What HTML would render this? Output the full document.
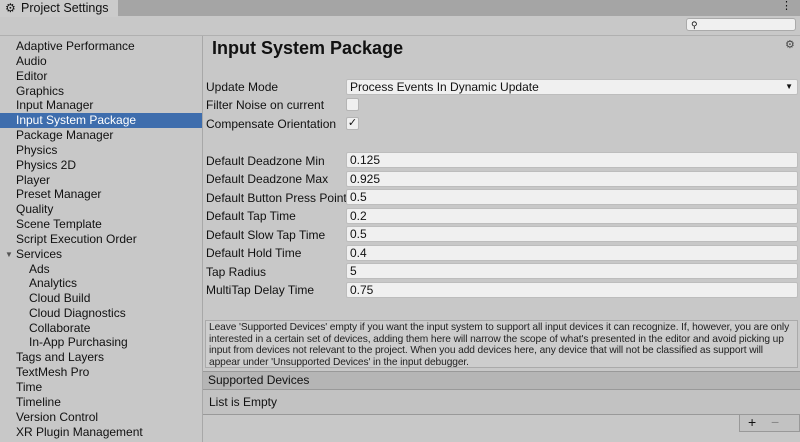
<!DOCTYPE html><html><head><style>
body{margin:0;width:800px;height:442px;background:#c8c8c8;font-family:"Liberation Sans",sans-serif;font-size:12px;color:#111;position:relative;overflow:hidden}
.a{position:absolute}
.tabbar{left:0;top:0;width:800px;height:16px;background:#a5a5a5}
.tab{left:0;top:0;width:118px;height:17px;background:#cbcbcb;font-size:12.5px;line-height:16px}
.side div{position:absolute;left:16px;height:15px;line-height:15px;white-space:nowrap}
.lbl{left:206px;white-space:nowrap}
.fld{left:346px;width:447px;height:14px;background:#f0f0f0;border:1px solid #bdbdbd;border-radius:2px;line-height:14px;padding-left:3px;box-sizing:content-box}
.chk{left:346px;width:11px;height:11px;background:#f0f0f0;border:1px solid #b5b5b5;border-radius:2px;font-size:11px;line-height:11px;text-align:center}
</style></head><body>
<div class="a tabbar"></div>
<div class="a tab"><span style="position:absolute;left:5px;top:0;font-size:12px">⚙</span><span style="position:absolute;left:21px">Project Settings</span></div>
<div class="a" style="right:8px;top:0;font-size:11px;line-height:12px">⋮</div>
<div class="a" style="left:0;top:35px;width:800px;height:1px;background:#b0b0b0"></div>
<div class="a" style="left:686px;top:18px;width:110px;height:13px;background:#f0f0f0;border:1px solid #aaa;border-radius:3px;font-size:9px;line-height:13px;padding-left:4px;box-sizing:border-box">⚲</div>
<div class="a" style="left:202px;top:36px;width:1px;height:406px;background:#a8a8a8"></div>
<div class="a" style="left:0;top:113px;width:202px;height:15px;background:#3e6dad"></div>
<div class="side" style="position:absolute;left:0;top:1px;width:202px">
<div style="top:38px">Adaptive Performance</div>
<div style="top:53px">Audio</div>
<div style="top:68px">Editor</div>
<div style="top:83px">Graphics</div>
<div style="top:97px">Input Manager</div>
<div style="top:112px;color:#fff">Input System Package</div>
<div style="top:127px">Package Manager</div>
<div style="top:142px">Physics</div>
<div style="top:157px">Physics 2D</div>
<div style="top:172px">Player</div>
<div style="top:186px">Preset Manager</div>
<div style="top:201px">Quality</div>
<div style="top:216px">Scene Template</div>
<div style="top:231px">Script Execution Order</div>
<div style="top:246px">Services</div>
<div style="top:261px;left:29px">Ads</div>
<div style="top:275px;left:29px">Analytics</div>
<div style="top:290px;left:29px">Cloud Build</div>
<div style="top:305px;left:29px">Cloud Diagnostics</div>
<div style="top:320px;left:29px">Collaborate</div>
<div style="top:334px;left:29px">In-App Purchasing</div>
<div style="top:349px">Tags and Layers</div>
<div style="top:364px">TextMesh Pro</div>
<div style="top:379px">Time</div>
<div style="top:394px">Timeline</div>
<div style="top:409px">Version Control</div>
<div style="top:424px">XR Plugin Management</div>
</div>
<div class="a" style="left:5px;top:250px;font-size:8px;color:#555">▼</div>
<div class="a" style="left:212px;top:38px;font-size:18px;font-weight:bold">Input System Package</div>
<div class="a" style="left:785px;top:38px;font-size:11px;color:#444">⚙</div>
<div class="a lbl" style="top:80px">Update Mode</div>
<div class="a fld" style="top:79px">Process Events In Dynamic Update<span style="position:absolute;right:4px;font-size:8px">▼</span></div>
<div class="a lbl" style="top:98px">Filter Noise on current</div>
<div class="a chk" style="top:98px"></div>
<div class="a lbl" style="top:117px">Compensate Orientation</div>
<div class="a chk" style="top:117px">✓</div>
<div class="a lbl" style="top:154px">Default Deadzone Min</div><div class="a fld" style="top:152px">0.125</div>
<div class="a lbl" style="top:172px">Default Deadzone Max</div><div class="a fld" style="top:171px">0.925</div>
<div class="a lbl" style="top:191px">Default Button Press Point</div><div class="a fld" style="top:189px">0.5</div>
<div class="a lbl" style="top:209px">Default Tap Time</div><div class="a fld" style="top:208px">0.2</div>
<div class="a lbl" style="top:228px">Default Slow Tap Time</div><div class="a fld" style="top:226px">0.5</div>
<div class="a lbl" style="top:246px">Default Hold Time</div><div class="a fld" style="top:245px">0.4</div>
<div class="a lbl" style="top:265px">Tap Radius</div><div class="a fld" style="top:263px">5</div>
<div class="a lbl" style="top:283px">MultiTap Delay Time</div><div class="a fld" style="top:282px">0.75</div>
<div class="a" style="left:205px;top:320px;width:593px;height:48px;border:1px solid #aaa;background:#cdcdcd;box-sizing:border-box;font-size:10.2px;line-height:11.5px;padding:1px 3px;color:#222;letter-spacing:-0.1px">Leave 'Supported Devices' empty if you want the input system to support all input devices it can recognize. If, however, you are only interested in a certain set of devices, adding them here will narrow the scope of what's presented in the editor and avoid picking up input from devices not relevant to the project. When you add devices here, any device that will not be classified as support will appear under 'Unsupported Devices' in the input debugger.</div>
<div class="a" style="left:203px;top:371px;width:597px;height:19px;background:#b5b5b5;border-top:1px solid #999;border-bottom:1px solid #999;box-sizing:border-box;line-height:17px;padding-left:5px">Supported Devices</div>
<div class="a" style="left:203px;top:390px;width:597px;height:25px;background:#c2c2c2;border-bottom:1px solid #999;box-sizing:border-box;line-height:25px;padding-left:6px">List is Empty</div>
<div class="a" style="left:739px;top:415px;width:61px;height:17px;background:#c2c2c2;border:1px solid #999;border-top:none;box-sizing:border-box;font-size:14px;line-height:15px"><span style="position:absolute;left:8px">+</span><span style="position:absolute;left:31px;color:#888">−</span></div>
</body></html>
